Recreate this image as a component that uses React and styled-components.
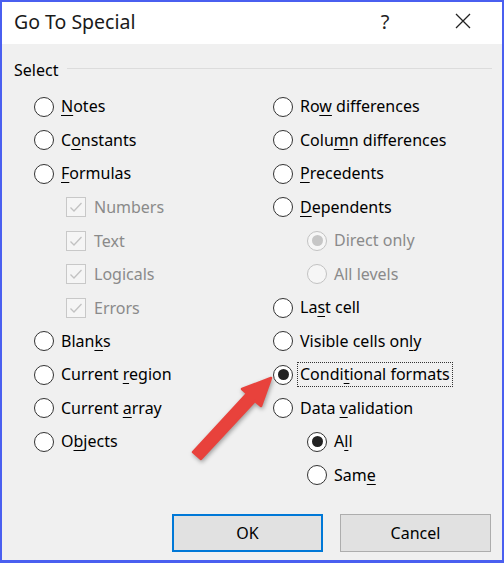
import React from 'react';
import styled, { createGlobalStyle } from 'styled-components';

const GlobalStyle = createGlobalStyle`
	html, body {
		margin: 0;
		padding: 0;
		background: #ffffff;
	}
	* {
		box-sizing: border-box;
	}
`

const Dialog = styled.div`
	position: relative;
	width: 504px;
	height: 563px;
	display: flex;
	flex-direction: column;
	border: 2px solid #4a5ff0;
	border-bottom-width: 3px;
	font-family: "Segoe UI", "Noto Sans", "Open Sans", sans-serif;
	color: #000;
	overflow: hidden;
`

const TitleBar = styled.div`
	height: 42px;
	flex: none;
	display: flex;
	align-items: center;
	background: #ffffff;
	padding: 0 0 4px 12px;
`

const Title = styled.div`
	flex: 1;
	font-size: 19.5px;
	color: #1a1a1a;
`

const TitleButton = styled.div`
	width: 78px;
	display: flex;
	justify-content: center;
	align-items: center;
	font-size: 20px;
	color: #222;
`

const Body = styled.div`
	flex: 1;
	display: flex;
	flex-direction: column;
	background: #f0f0f0;
`

const Legend = styled.div`
	display: flex;
	align-items: center;
	gap: 9px;
	height: 20px;
	margin: 16px 10px 10px 12px;
	font-size: 16px;
	&::after {
		content: '';
		flex: 1;
		height: 1px;
		margin-top: -3px;
		background: #dcdcdc;
	}
`

const Columns = styled.div`
	display: grid;
	grid-template-columns: 239px 1fr;
	padding-left: 32px;
`

const Column = styled.div`
	display: flex;
	flex-direction: column;
`

const Row = styled.div`
	height: 33.5px;
	display: flex;
	align-items: center;
	padding-left: ${props => props.indent || 0}px;
	font-size: 16px;
	color: ${props => props.disabled ? '#8a8a8a' : '#000'};
`

const Radio = styled.span`
	flex: none;
	width: 20px;
	height: 20px;
	border-radius: 50%;
	border: 1.6px solid ${props => props.disabled ? '#c2c2c2' : '#333'};
	background: ${props => props.disabled ? '#f6f6f6' : '#fff'};
	display: flex;
	align-items: center;
	justify-content: center;
	margin-right: 7px;
	&::after {
		content: '';
		display: ${props => props.checked ? 'block' : 'none'};
		width: 11px;
		height: 11px;
		border-radius: 50%;
		background: ${props => props.disabled ? '#c6c6c6' : '#222'};
	}
`

const Check = styled.span`
	flex: none;
	width: 20px;
	height: 20px;
	border: 1px solid #c8c8c8;
	background: #f5f5f5;
	display: flex;
	align-items: center;
	justify-content: center;
	margin-right: 8px;
`

const Label = styled.span`
	padding: 1px 2px;
	margin-left: -3px;
	border: 1px dotted ${props => props.focused ? '#333' : 'transparent'};
	line-height: 21px;
`

const Key = styled.span`
	text-decoration: underline;
	text-underline-offset: 3px;
	text-decoration-thickness: 1px;
`

const ButtonRow = styled.div`
	margin-top: auto;
	display: flex;
	justify-content: flex-end;
	gap: 17px;
	padding: 0 11px 8px 0;
`

const Button = styled.div`
	width: 151px;
	height: 38px;
	display: flex;
	align-items: center;
	justify-content: center;
	font-size: 16px;
	background: #e1e1e1;
	border: ${props => props.primary ? '2px solid #0078d7' : '1px solid #adadad'};
`

const ArrowLayer = styled.svg`
	position: absolute;
	left: 176px;
	top: 356px;
	width: 110px;
	height: 115px;
	overflow: visible;
	filter: drop-shadow(1px 2px 2px rgba(0, 0, 0, 0.35));
`

function Text({ text, k }) {
	if (k == null) return text;
	return (
		<>
			{text.slice(0, k)}
			<Key>{text[k]}</Key>
			{text.slice(k + 1)}
		</>
	);
}

function RadioRow({ text, k, checked, disabled, indent, focused }) {
	return (
		<Row disabled={disabled} indent={indent}>
			<Radio checked={checked} disabled={disabled} />
			<Label focused={focused}><Text text={text} k={k} /></Label>
		</Row>
	);
}

function CheckRow({ text }) {
	return (
		<Row disabled indent={32}>
			<Check>
				<svg width="14" height="12" viewBox="0 0 14 12">
					<path d="M1.5 6.5 L5 10 L12.5 2" fill="none" stroke="#c2c2c2" strokeWidth="1.3" />
				</svg>
			</Check>
			<span>{text}</span>
		</Row>
	);
}

export default function App() {
	return (
		<>
			<GlobalStyle />
			<Dialog>
				<TitleBar>
					<Title>Go To Special</Title>
					<TitleButton>?</TitleButton>
					<TitleButton>
						<svg width="16" height="16" viewBox="0 0 16 16">
							<path d="M1 1 L15 15 M15 1 L1 15" stroke="#222" strokeWidth="1.3" />
						</svg>
					</TitleButton>
				</TitleBar>
				<Body>
					<Legend>Select</Legend>
					<Columns>
						<Column>
							<RadioRow text="Notes" k={0} />
							<RadioRow text="Constants" k={1} />
							<RadioRow text="Formulas" k={0} />
							<CheckRow text="Numbers" />
							<CheckRow text="Text" />
							<CheckRow text="Logicals" />
							<CheckRow text="Errors" />
							<RadioRow text="Blanks" k={4} />
							<RadioRow text="Current region" k={8} />
							<RadioRow text="Current array" k={8} />
							<RadioRow text="Objects" k={1} />
						</Column>
						<Column>
							<RadioRow text="Row differences" k={2} />
							<RadioRow text="Column differences" k={4} />
							<RadioRow text="Precedents" k={0} />
							<RadioRow text="Dependents" k={0} />
							<RadioRow text="Direct only" checked disabled indent={34} />
							<RadioRow text="All levels" disabled indent={34} />
							<RadioRow text="Last cell" k={2} />
							<RadioRow text="Visible cells only" k={16} />
							<RadioRow text="Conditional formats" k={5} checked focused />
							<RadioRow text="Data validation" k={5} />
							<RadioRow text="All" k={1} checked indent={34} />
							<RadioRow text="Same" k={3} indent={34} />
						</Column>
					</Columns>
					<ButtonRow>
						<Button primary>OK</Button>
						<Button>Cancel</Button>
					</ButtonRow>
				</Body>
				<ArrowLayer viewBox="0 0 110 115">
					<polygon
						points="93,20 64,31 69,35.5 15,94 23,101 77,43 83,48"
						fill="#e8423c"
						stroke="#e8423c"
						strokeWidth="2.5"
						strokeLinejoin="round"
					/>
				</ArrowLayer>
			</Dialog>
		</>
	);
}
